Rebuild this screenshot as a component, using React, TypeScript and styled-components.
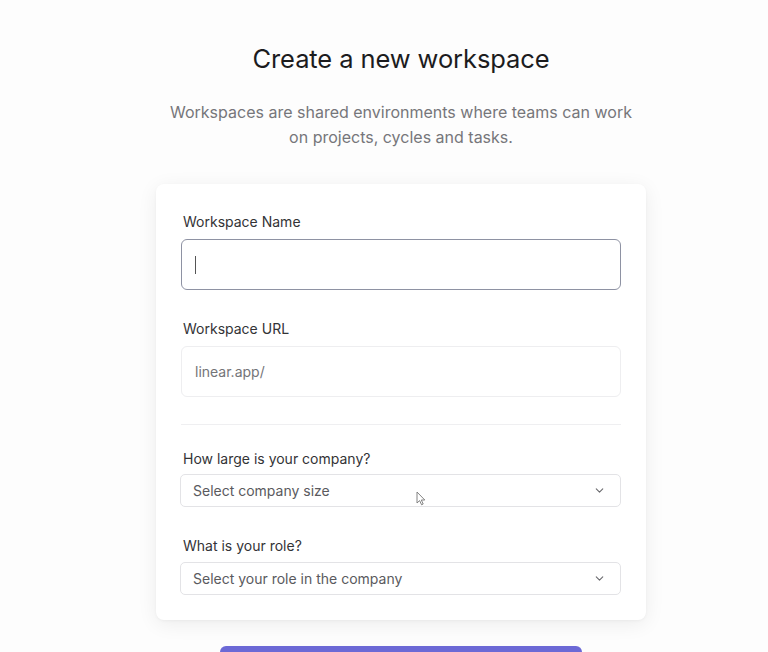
import * as React from "react";
import styled, { createGlobalStyle } from "styled-components";
import { ChevronDown } from "lucide-react";

const GlobalStyle = createGlobalStyle`
  html, body {
    margin: 0;
    padding: 0;
    background: #fdfdfd;
    font-family: 'Inter', 'Liberation Sans', sans-serif;
    color: #222;
  }
`;

const Page = styled.main`
  display: flex;
  flex-direction: column;
  align-items: center;
  padding: 42px 0 0 34px;
`;

const Title = styled.h1`
  margin: 0;
  font-size: 25.5px;
  line-height: 34px;
  font-weight: 400;
  color: #1c1c1e;
  letter-spacing: -0.1px;
`;

const Subtitle = styled.p`
  margin: 24px 0 0;
  max-width: 470px;
  text-align: center;
  font-size: 16px;
  line-height: 25px;
  color: #76767a;
`;

const Card = styled.section`
  margin-top: 34px;
  width: 490px;
  box-sizing: border-box;
  padding: 28px 25px 25px;
  background: #ffffff;
  border-radius: 8px;
  box-shadow: 0 4px 20px rgba(0, 0, 0, 0.07), 0 1px 3px rgba(0, 0, 0, 0.04);
  display: flex;
  flex-direction: column;
`;

const Field = styled.div<{ $gap: number; $top?: number }>`
  display: flex;
  flex-direction: column;
  gap: ${(p) => p.$gap}px;
  margin-top: ${(p) => p.$top ?? 0}px;
`;

const Label = styled.label`
  padding-left: 2px;
  font-size: 14px;
  line-height: 20px;
  color: #333336;
`;

const TextBox = styled.div<{ $focused?: boolean }>`
  height: 51px;
  box-sizing: border-box;
  display: flex;
  align-items: center;
  padding: 0 13px;
  border-radius: 6px;
  border: 1px solid ${(p) => (p.$focused ? "#8e92a3" : "#eeeef0")};
  font-size: 14px;
  color: #747478;
`;

const Caret = styled.span`
  width: 1px;
  height: 18px;
  background: #555;
`;

const Divider = styled.hr`
  margin: 27px 0 0;
  border: 0;
  border-top: 1px solid #efeff1;
`;

const SelectBox = styled.div`
  position: relative;
  height: 33px;
  margin-left: -1px;
  box-sizing: border-box;
  display: flex;
  align-items: center;
  justify-content: space-between;
  padding: 0 14px 0 12px;
  border-radius: 5px;
  border: 1px solid #e3e3e6;
  font-size: 14px;
  color: #5a5a5e;
`;

const Pointer = styled.svg`
  position: absolute;
  left: 235px;
  top: 16px;
`;

const Submit = styled.button`
  margin-top: 26px;
  width: 362px;
  height: 48px;
  border: 0;
  border-radius: 6px;
  background: #6c69d6;
`;

export default function App() {
  return (
    <>
      <GlobalStyle />
      <Page>
        <Title>Create a new workspace</Title>
        <Subtitle>
          Workspaces are shared environments where teams can work on projects, cycles and tasks.
        </Subtitle>
        <Card>
          <Field $gap={7}>
            <Label>Workspace Name</Label>
            <TextBox $focused>
              <Caret />
            </TextBox>
          </Field>
          <Field $gap={7} $top={29}>
            <Label>Workspace URL</Label>
            <TextBox>linear.app/</TextBox>
          </Field>
          <Divider />
          <Field $gap={5} $top={24}>
            <Label>How large is your company?</Label>
            <SelectBox>
              Select company size
              <ChevronDown size={13} color="#6a6a6e" strokeWidth={2} />
              <Pointer width="10" height="15" viewBox="0 0 10 15">
                <path d="M1 1 L1 12 L3.6 9.6 L5.6 13.8 L7.2 13 L5.3 9 L8.8 9 Z" fill="#fff" stroke="#777" strokeWidth="0.9" strokeLinejoin="round" />
              </Pointer>
            </SelectBox>
          </Field>
          <Field $gap={6} $top={29}>
            <Label>What is your role?</Label>
            <SelectBox>
              Select your role in the company
              <ChevronDown size={13} color="#6a6a6e" strokeWidth={2} />
            </SelectBox>
          </Field>
        </Card>
        <Submit aria-label="Create workspace" />
      </Page>
    </>
  );
}
